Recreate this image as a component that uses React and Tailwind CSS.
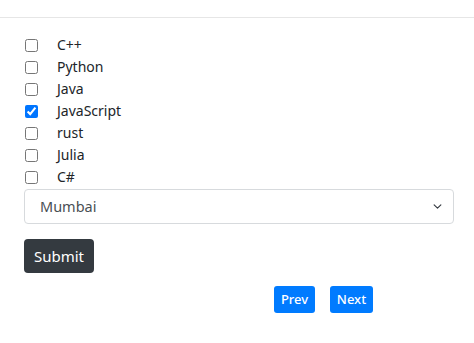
import React from "react";

const langs = ["C++", "Python", "Java", "JavaScript", "rust", "Julia", "C#"];

export default function App() {
  return (
    <div className="w-[474px] h-[343px] bg-white" style={{ fontFamily: '"Noto Sans", "Open Sans", sans-serif' }}>
      <div className="h-[18px] border-b border-[#e6e6e6]"></div>
      <div className="pl-[24px] pt-[16px]">
        <div className="flex flex-col">
          {langs.map((l) => (
            <label key={l} className="flex items-center h-[22px]">
              <input type="checkbox" defaultChecked={l === "JavaScript"} className="m-0 ml-[1px] w-[13px] h-[13px]" />
              <span className="ml-[19px] text-[14px] text-[#212529] leading-[22px]">{l}</span>
            </label>
          ))}
        </div>
        <div className="relative w-[430px] mt-[1px]">
          <select className="appearance-none w-full h-[35px] border border-[#d7dadd] rounded-[4px] pl-[15px] text-[14.5px] text-[#4a4f54] bg-white outline-none">
            <option>Mumbai</option>
          </select>
          <svg className="absolute right-[11px] top-[13px] pointer-events-none" width="11" height="9" viewBox="0 0 16 16">
            <path d="M2 5l6 6 6-6" fill="none" stroke="#343a40" strokeWidth="2" strokeLinecap="round" strokeLinejoin="round" />
          </svg>
        </div>
        <button className="mt-[15px] w-[70px] h-[34px] rounded-[4px] bg-[#343a40] text-white text-[15px]">Submit</button>
        <div className="flex mt-[13px] pl-[250px] gap-[15px]">
          <button className="w-[41px] h-[27px] rounded-[3px] bg-[#007bff] text-white text-[13px] font-medium">Prev</button>
          <button className="w-[43px] h-[27px] rounded-[3px] bg-[#007bff] text-white text-[13px] font-medium">Next</button>
        </div>
      </div>
    </div>
  );
}
